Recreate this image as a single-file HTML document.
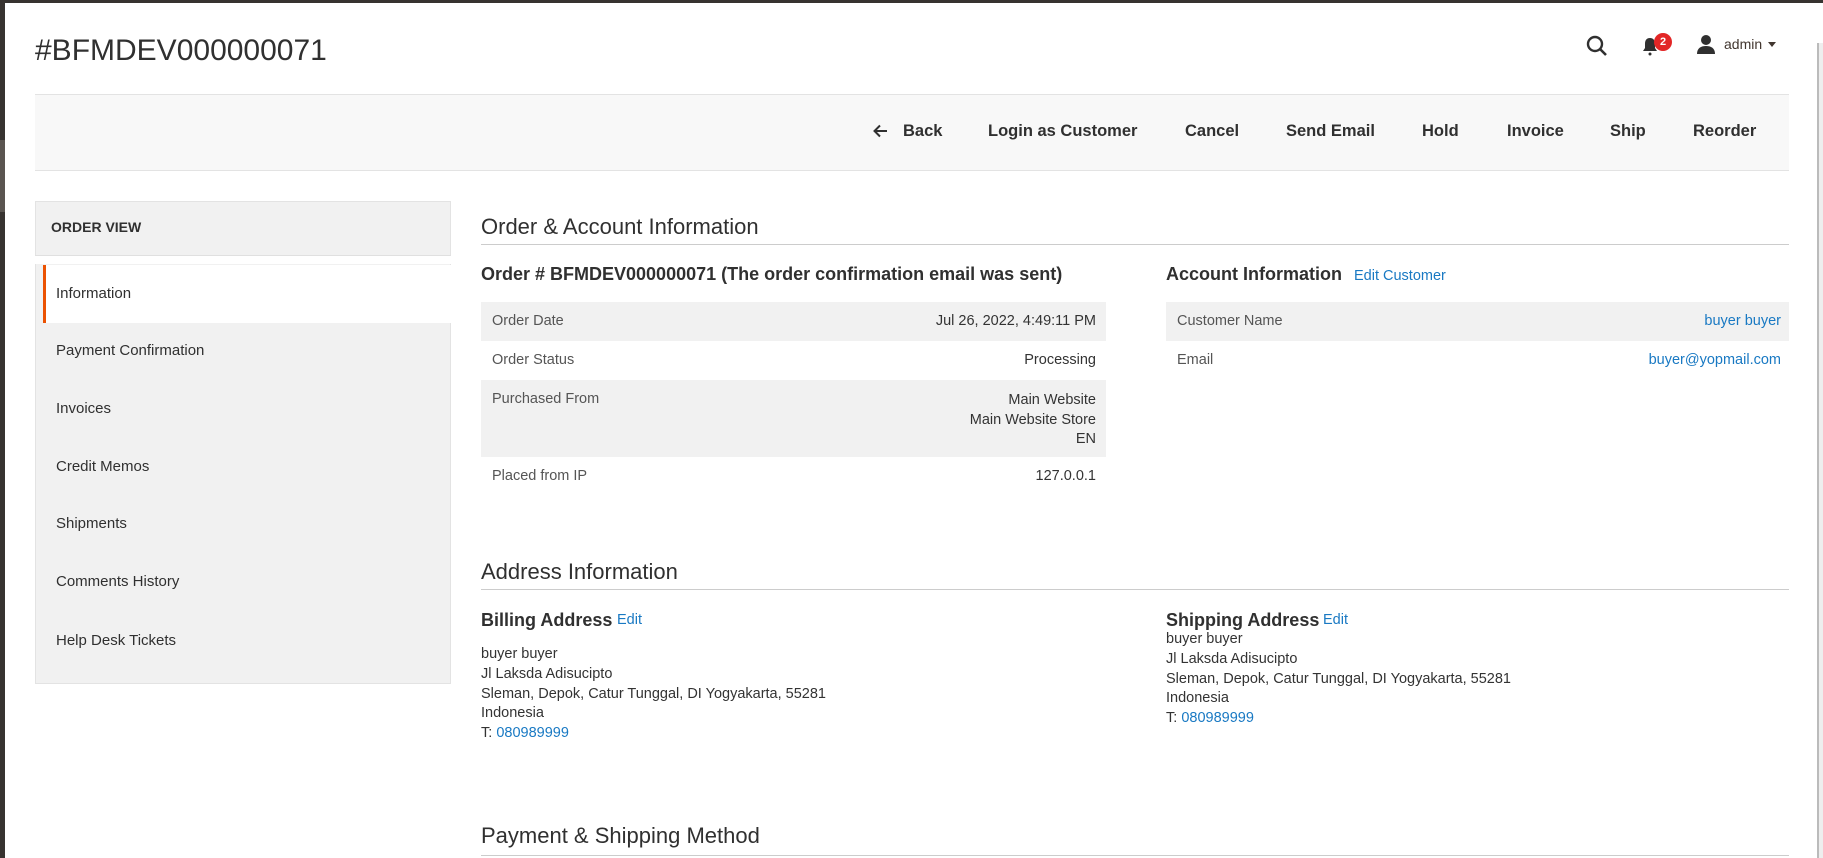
<!DOCTYPE html>
<html><head><meta charset="utf-8"><style>
*{margin:0;padding:0;box-sizing:border-box}
body{width:1823px;height:858px;overflow:hidden;background:#fff;font-family:"Liberation Sans",sans-serif;color:#303030;position:relative}
.a{position:absolute;white-space:nowrap}
.lk{color:#1979c3 !important}
.btn{position:absolute;top:122px;font-size:16.5px;font-weight:bold;color:#303030}
.side{position:absolute;left:35px;width:416px;background:#f1f1f1}
.si{position:absolute;left:56px;font-size:15px;color:#303030}
.h2{position:absolute;left:481px;font-size:22px;color:#303030}
.hr{position:absolute;left:481px;width:1308px;height:1px;background:#ccc}
.row{position:absolute;font-size:14.5px;color:#555}
.gr{background:#f1f1f1}
.addr{position:absolute;font-size:14.5px;line-height:19.8px;color:#333}
</style></head><body>
<div class="a" style="left:0;top:0;width:1823px;height:3px;background:#373330"></div>
<div class="a" style="left:0;top:0;width:5px;height:858px;background:#373330"></div>
<div class="a" style="left:0;top:140px;width:5px;height:72px;background:#5a5550"></div>
<div class="a" style="left:1817px;top:43px;width:6px;height:815px;background:#eee;border-left:2px solid #bbb"></div>

<div class="a" style="left:35px;top:34px;font-size:30px;color:#303030">#BFMDEV000000071</div>
<svg class="a" style="left:1586px;top:35px" width="22" height="22" viewBox="0 0 22 22"><circle cx="9" cy="9" r="7" fill="none" stroke="#303030" stroke-width="2.4"/><path d="M14 14l6 6" stroke="#303030" stroke-width="2.6"/></svg>
<svg class="a" style="left:1641px;top:36px" width="18" height="20" viewBox="0 0 18 20"><path d="M9 2c-4 0-5 3-5 6v4l-2 3h14l-2-3V8c0-3-1-6-5-6z" fill="#303030"/><circle cx="9" cy="18" r="1.5" fill="#303030"/></svg>
<div class="a" style="left:1654px;top:33px;width:18px;height:18px;border-radius:50%;background:#e22626;color:#fff;font-size:11px;font-weight:bold;text-align:center;line-height:18px">2</div>
<svg class="a" style="left:1696px;top:34px" width="20" height="20" viewBox="0 0 20 20"><circle cx="10" cy="6" r="5" fill="#303030"/><path d="M1 20c0-6 4-8 9-8s9 2 9 8z" fill="#303030"/></svg>
<div class="a" style="left:1724px;top:36px;font-size:14px;color:#41362f">admin</div>
<div class="a" style="left:1768px;top:42px;width:0;height:0;border-left:4px solid transparent;border-right:4px solid transparent;border-top:5px solid #41362f"></div>

<div class="a" style="left:35px;top:94px;width:1754px;height:77px;background:#f8f8f8;border-top:1px solid #e3e3e3;border-bottom:1px solid #e3e3e3"></div>
<svg class="a" style="left:872px;top:124px" width="16" height="14" viewBox="0 0 16 14"><path d="M15 7H3M8 1.5L2.5 7 8 12.5" fill="none" stroke="#303030" stroke-width="2"/></svg>
<div class="btn" style="left:903px">Back</div>
<div class="btn" style="left:988px">Login as Customer</div>
<div class="btn" style="left:1185px">Cancel</div>
<div class="btn" style="left:1286px">Send Email</div>
<div class="btn" style="left:1422px">Hold</div>
<div class="btn" style="left:1507px">Invoice</div>
<div class="btn" style="left:1610px">Ship</div>
<div class="btn" style="left:1693px">Reorder</div>

<div class="side" style="top:201px;height:483px;border:1px solid #e3e3e3"></div>
<div class="a" style="left:35px;top:255px;width:416px;height:1px;background:#e0e0e0"></div>
<div class="a" style="left:35px;top:256px;width:416px;height:8px;background:#fff"></div>
<div class="a" style="left:43px;top:265px;width:408px;height:58px;background:#fff;border-left:3px solid #eb5202"></div>
<div class="a" style="left:51px;top:219px;font-size:14px;font-weight:bold;color:#303030">ORDER VIEW</div>
<div class="si" style="top:285px">Information</div>
<div class="si" style="top:342px">Payment Confirmation</div>
<div class="si" style="top:400px">Invoices</div>
<div class="si" style="top:458px">Credit Memos</div>
<div class="si" style="top:515px">Shipments</div>
<div class="si" style="top:573px">Comments History</div>
<div class="si" style="top:632px">Help Desk Tickets</div>

<div class="h2" style="top:214px">Order &amp; Account Information</div>
<div class="hr" style="top:244px"></div>
<div class="a" style="left:481px;top:264px;font-size:18px;font-weight:bold;color:#303030">Order # BFMDEV000000071 (The order confirmation email was sent)</div>
<div class="a" style="left:1166px;top:264px;font-size:18px;font-weight:bold;color:#303030">Account Information</div>
<div class="a lk" style="left:1354px;top:268px;font-size:14.5px">Edit Customer</div>

<div class="a gr" style="left:481px;top:302px;width:625px;height:39px"></div>
<div class="a gr" style="left:481px;top:380px;width:625px;height:77px"></div>
<div class="row" style="left:492px;top:313px">Order Date</div>
<div class="row" style="left:492px;top:352px">Order Status</div>
<div class="row" style="left:492px;top:391px">Purchased From</div>
<div class="row" style="left:492px;top:468px">Placed from IP</div>
<div class="row" style="right:727px;top:313px;color:#333">Jul 26, 2022, 4:49:11 PM</div>
<div class="row" style="right:727px;top:352px;color:#333">Processing</div>
<div class="row" style="right:727px;top:391px;color:#333;text-align:right;line-height:19.5px">Main Website<br>Main Website Store<br>EN</div>
<div class="row" style="right:727px;top:468px;color:#333">127.0.0.1</div>

<div class="a gr" style="left:1166px;top:302px;width:623px;height:39px"></div>
<div class="row" style="left:1177px;top:313px">Customer Name</div>
<div class="row" style="left:1177px;top:352px">Email</div>
<div class="row lk" style="right:42px;top:313px">buyer buyer</div>
<div class="row lk" style="right:42px;top:352px">buyer@yopmail.com</div>

<div class="h2" style="top:559px">Address Information</div>
<div class="hr" style="top:589px"></div>
<div class="a" style="left:481px;top:610px;font-size:18px;font-weight:bold">Billing Address</div>
<div class="a lk" style="left:617px;top:612px;font-size:14.5px">Edit</div>
<div class="addr" style="left:481px;top:645px">buyer buyer<br>Jl Laksda Adisucipto<br>Sleman, Depok, Catur Tunggal, DI Yogyakarta, 55281<br>Indonesia<br>T: <span class="lk">080989999</span></div>
<div class="a" style="left:1166px;top:610px;font-size:18px;font-weight:bold">Shipping Address</div>
<div class="a lk" style="left:1323px;top:612px;font-size:14.5px">Edit</div>
<div class="addr" style="left:1166px;top:630px">buyer buyer<br>Jl Laksda Adisucipto<br>Sleman, Depok, Catur Tunggal, DI Yogyakarta, 55281<br>Indonesia<br>T: <span class="lk">080989999</span></div>

<div class="h2" style="top:823px">Payment &amp; Shipping Method</div>
<div class="hr" style="top:855px"></div>
</body></html>
